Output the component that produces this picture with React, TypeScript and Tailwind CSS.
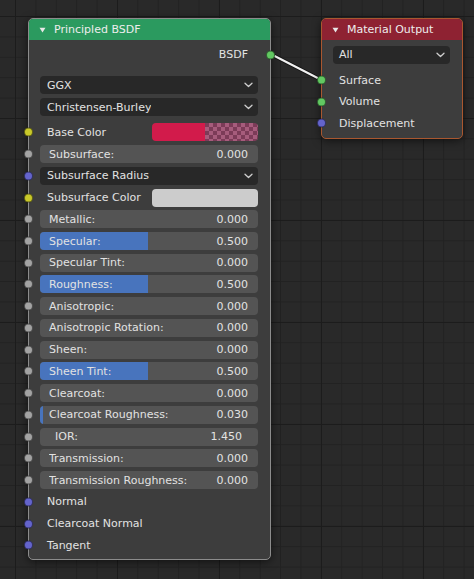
import type { ReactNode } from "react";

// ── Data ──────────────────────────────────────────────────────────────────────

type SocketColor = "yellow" | "grey" | "purple" | "green";

const SOCKET_BG: Record<SocketColor, string> = {
  yellow: "bg-[#c9c92a]",
  grey: "bg-[#a3a3a3]",
  purple: "bg-[#6464cc]",
  green: "bg-[#62c862]",
};

type Input =
  | { kind: "slider"; label: string; value: string; fill: number; inset?: boolean }
  | { kind: "dropdown"; label: string }
  | { kind: "color"; label: string; swatch: "base" | "light" }
  | { kind: "plain"; label: string };

const INPUTS: { socket: SocketColor; input: Input }[] = [
  { socket: "yellow", input: { kind: "color", label: "Base Color", swatch: "base" } },
  { socket: "grey", input: { kind: "slider", label: "Subsurface:", value: "0.000", fill: 0 } },
  { socket: "purple", input: { kind: "dropdown", label: "Subsurface Radius" } },
  { socket: "yellow", input: { kind: "color", label: "Subsurface Color", swatch: "light" } },
  { socket: "grey", input: { kind: "slider", label: "Metallic:", value: "0.000", fill: 0 } },
  { socket: "grey", input: { kind: "slider", label: "Specular:", value: "0.500", fill: 0.494 } },
  { socket: "grey", input: { kind: "slider", label: "Specular Tint:", value: "0.000", fill: 0 } },
  { socket: "grey", input: { kind: "slider", label: "Roughness:", value: "0.500", fill: 0.494 } },
  { socket: "grey", input: { kind: "slider", label: "Anisotropic:", value: "0.000", fill: 0 } },
  { socket: "grey", input: { kind: "slider", label: "Anisotropic Rotation:", value: "0.000", fill: 0 } },
  { socket: "grey", input: { kind: "slider", label: "Sheen:", value: "0.000", fill: 0 } },
  { socket: "grey", input: { kind: "slider", label: "Sheen Tint:", value: "0.500", fill: 0.494 } },
  { socket: "grey", input: { kind: "slider", label: "Clearcoat:", value: "0.000", fill: 0 } },
  { socket: "grey", input: { kind: "slider", label: "Clearcoat Roughness:", value: "0.030", fill: 0.015 } },
  { socket: "grey", input: { kind: "slider", label: "IOR:", value: "1.450", fill: 0, inset: true } },
  { socket: "grey", input: { kind: "slider", label: "Transmission:", value: "0.000", fill: 0 } },
  { socket: "grey", input: { kind: "slider", label: "Transmission Roughness:", value: "0.000", fill: 0 } },
  { socket: "purple", input: { kind: "plain", label: "Normal" } },
  { socket: "purple", input: { kind: "plain", label: "Clearcoat Normal" } },
  { socket: "purple", input: { kind: "plain", label: "Tangent" } },
];

// ── Bits ──────────────────────────────────────────────────────────────────────

function Socket({ color, side }: { color: SocketColor; side: "left" | "right" }) {
  return (
    <span
      className={`absolute top-1/2 h-[9px] w-[9px] -translate-y-1/2 rounded-full border border-black/50 ${SOCKET_BG[color]} ${
        side === "left" ? "left-[-5px]" : "right-[-5px]"
      }`}
    />
  );
}

function Chevron() {
  return (
    <svg width="9" height="6" viewBox="0 0 9 6" className="shrink-0">
      <path d="M1 1.2l3.5 3.3L8 1.2" fill="none" stroke="#cfcfcf" strokeWidth="1.3" strokeLinecap="round" strokeLinejoin="round" />
    </svg>
  );
}

function Collapse() {
  return (
    <svg width="7" height="6" viewBox="0 0 7 6" className="shrink-0">
      <path d="M0.5 0.8h6L3.5 5.4z" fill="#e8e8e8" />
    </svg>
  );
}

function Row({ socket, className = "", children }: { socket?: SocketColor; className?: string; children: ReactNode }) {
  return (
    <div className={`relative flex h-[21.74px] items-center ${className}`}>
      {socket && <Socket color={socket} side="left" />}
      {children}
    </div>
  );
}

function Dropdown({ label }: { label: string }) {
  return (
    <div className="flex h-[18px] flex-1 items-center rounded-[4px] bg-[#282828] pl-[7px] pr-[5px]">
      <span className="truncate">{label}</span>
      <span className="ml-auto">
        <Chevron />
      </span>
    </div>
  );
}

function InputField({ input }: { input: Input }) {
  if (input.kind === "dropdown") return <Dropdown label={input.label} />;
  if (input.kind === "plain") return <span className="pl-[7px]">{input.label}</span>;
  if (input.kind === "color") {
    return (
      <>
        <span className="flex-1 pl-[7px]">{input.label}</span>
        {input.swatch === "base" ? (
          <div className="flex h-[18px] w-[106px] overflow-hidden rounded-[4px]">
            <div className="w-[53px] bg-[#d21b4b]" />
            <div className="flex-1 [background-image:repeating-conic-gradient(#a65c7c_0_25%,#7c3b58_0_50%)] [background-size:8px_8px]" />
          </div>
        ) : (
          <div className="h-[18px] w-[106px] rounded-[4px] bg-[#cccccc]" />
        )}
      </>
    );
  }
  return (
    <div
      className={`relative flex h-[18px] flex-1 items-center overflow-hidden rounded-[4px] bg-[#545454] ${
        input.inset ? "pl-[15px] pr-[16px]" : "pl-[9px] pr-[10px]"
      }`}
    >
      {input.fill > 0 && (
        <div className="absolute inset-y-0 left-0 bg-[#4874bd]" style={{ width: `${input.fill * 100}%` }} />
      )}
      <span className="relative truncate">{input.label}</span>
      <span className="relative ml-auto">{input.value}</span>
    </div>
  );
}

function NodeHeader({ title, className }: { title: string; className: string }) {
  return (
    <div className={`flex h-[21px] items-center rounded-t-[4px] pl-[10px] text-[#ededed] ${className}`}>
      <Collapse />
      <span className="ml-[8px]">{title}</span>
    </div>
  );
}

// ── Nodes ─────────────────────────────────────────────────────────────────────

function PrincipledNode() {
  return (
    <div className="absolute left-[28px] top-[18px] w-[243px] rounded-[5px] border border-[#8c8c8c] bg-[#3d3d3d] shadow-[0_2px_8px_rgba(0,0,0,0.55)]">
      <NodeHeader title="Principled BSDF" className="bg-[#2b9a5f]" />
      <div className="flex flex-col pb-[3px] pt-[4px]">
        <div className="relative flex h-[21.74px] items-center justify-end pr-[22px]">
          <span>BSDF</span>
          <Socket color="green" side="right" />
        </div>
        <div className="mt-[8.7px] flex flex-col pl-[11px] pr-[12px]">
          <Row>
            <Dropdown label="GGX" />
          </Row>
          <Row>
            <Dropdown label="Christensen-Burley" />
          </Row>
        </div>
        <div className="mt-[3.6px] flex flex-col">
          {INPUTS.map(({ socket, input }) => (
            <Row key={input.label} socket={socket} className="pl-[11px] pr-[12px]">
              <InputField input={input} />
            </Row>
          ))}
        </div>
      </div>
    </div>
  );
}

function MaterialOutputNode() {
  return (
    <div className="absolute left-[321px] top-[18px] w-[142px] rounded-[5px] border border-[#a9572f] bg-[#3d3d3d] shadow-[0_2px_8px_rgba(0,0,0,0.55)]">
      <NodeHeader title="Material Output" className="bg-[#8e2232]" />
      <div className="flex flex-col pb-[4px] pt-[4px]">
        <Row className="pl-[11px] pr-[12px]">
          <div className="flex h-[18px] flex-1 items-center rounded-[4px] bg-[#282828] pl-[6px] pr-[5px]">
            <span>All</span>
            <span className="ml-auto">
              <Chevron />
            </span>
          </div>
        </Row>
        <div className="mt-[3.9px] flex flex-col">
          {[
            { label: "Surface", socket: "green" as const },
            { label: "Volume", socket: "green" as const },
            { label: "Displacement", socket: "purple" as const },
          ].map((s) => (
            <div key={s.label} className="relative flex h-[21.5px] items-center pl-[17px]">
              <Socket color={s.socket} side="left" />
              <span>{s.label}</span>
            </div>
          ))}
        </div>
      </div>
    </div>
  );
}

// ── Screen ────────────────────────────────────────────────────────────────────

export default function App() {
  return (
    <div
      className="relative h-[579px] w-[474px] overflow-hidden bg-[#292929] text-[11px] leading-none text-[#e2e2e2] [background-image:linear-gradient(to_right,#1c1c1c_1px,transparent_1px),linear-gradient(to_bottom,#1c1c1c_1px,transparent_1px),linear-gradient(to_right,#222222_1px,transparent_1px),linear-gradient(to_bottom,#222222_1px,transparent_1px)] [background-position:15px_16px] [background-size:102px_102px,102px_102px,20.4px_20.4px,20.4px_20.4px]"
      style={{ fontFamily: '"DejaVu Sans", "Liberation Sans", sans-serif' }}
    >
      <svg className="absolute inset-0" width="474" height="579">
        <line x1="270.7" y1="54" x2="321.5" y2="80" stroke="rgba(0,0,0,0.55)" strokeWidth="4" />
        <line x1="270.7" y1="54" x2="321.5" y2="80" stroke="#f2f2f2" strokeWidth="2" />
      </svg>
      <PrincipledNode />
      <MaterialOutputNode />
    </div>
  );
}
